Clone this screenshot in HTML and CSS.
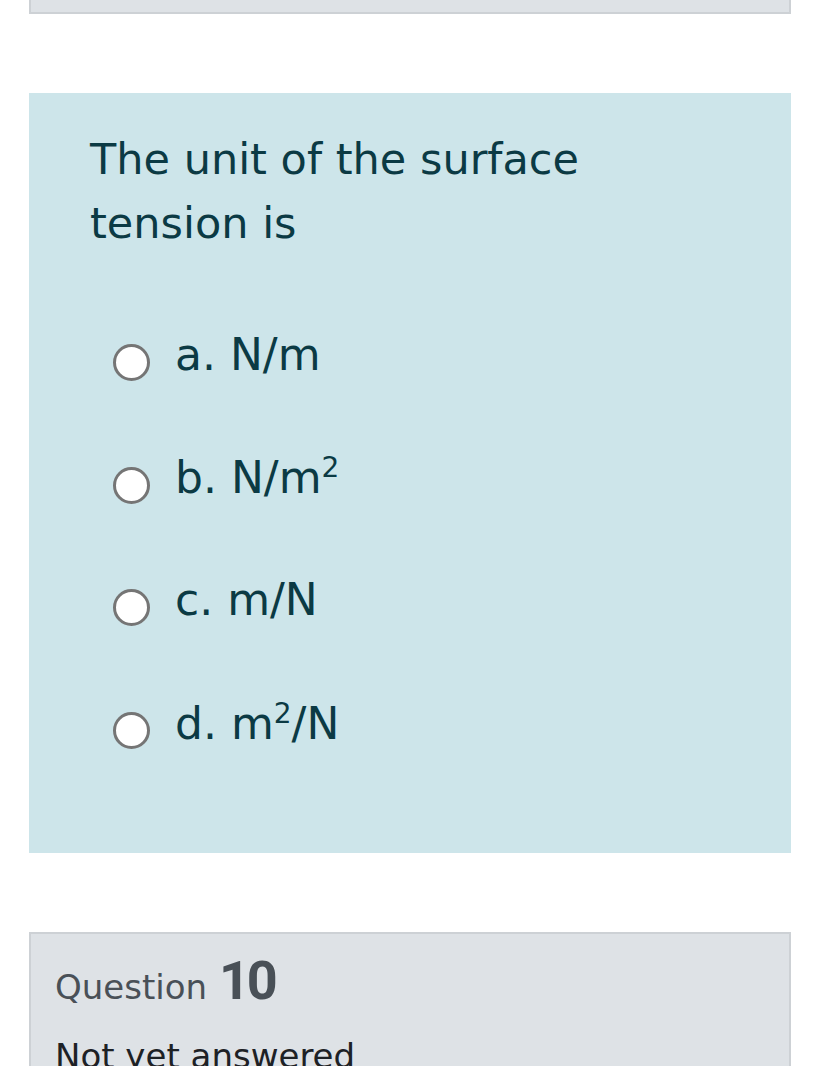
FILE: index.html
```html
<!DOCTYPE html>
<html>
<head>
    <title>Quiz</title>
    <meta name="viewport" content="width=device-width, initial-scale=1">
    <link rel="stylesheet" href="styles.css">
</head>
<body>
    <div class="que-info prev"></div>

    <div class="formulation">
        <div class="qtext">The unit of the surface tension is</div>
        <div class="answer">
            <label class="opt"><span class="radio"></span><span>a. N/m</span></label>
            <label class="opt"><span class="radio"></span><span>b. N/m<sup>2</sup></span></label>
            <label class="opt"><span class="radio"></span><span>c. m/N</span></label>
            <label class="opt"><span class="radio"></span><span>d. m<sup>2</sup>/N</span></label>
        </div>
    </div>

    <div class="que-info">
        <h3 class="qno">Question <span class="num">10</span></h3>
        <div class="state">Not yet answered</div>
    </div>
</body>
</html>
```

FILE: styles.css
```css
body { margin: 0; background: #fff; font-family: "DejaVu Sans", sans-serif; color: #0b3a44; overflow: hidden; }

.que-info { background: #dee2e6; border: 2px solid #cdd1d5; margin: 79px 29px 0; padding: 15px 24px 18px; }
.que-info.prev { margin-top: 0; border-top: none; height: 12px; padding: 0; }
.qno { margin: 0; font-weight: normal; font-size: 34px; color: #495057; line-height: 1.2; }
.qno .num { font-family: Roboto, sans-serif; font-weight: bold; font-size: 54px; letter-spacing: -3px; margin-left: 1px; }
.state { font-size: 34px; color: #1d2125; margin-top: 22px; }

/* question box */
.formulation { background: #cde5ea; margin: 79px 29px 0; padding: 34px 61px 0; height: 726px; }
.qtext { font-size: 43px; line-height: 64px; width: 560px; }
.answer { margin-top: 38px; padding-left: 24px; }
.opt { display: flex; align-items: center; gap: 25px; font-size: 44px; height: 122.7px; }
.opt sup { font-size: 28px; }
.radio { width: 31px; height: 31px; border: 3px solid #757575; border-radius: 50%; background: #fff; margin-top: 16px; margin-left: -1px; flex: none; }
```
